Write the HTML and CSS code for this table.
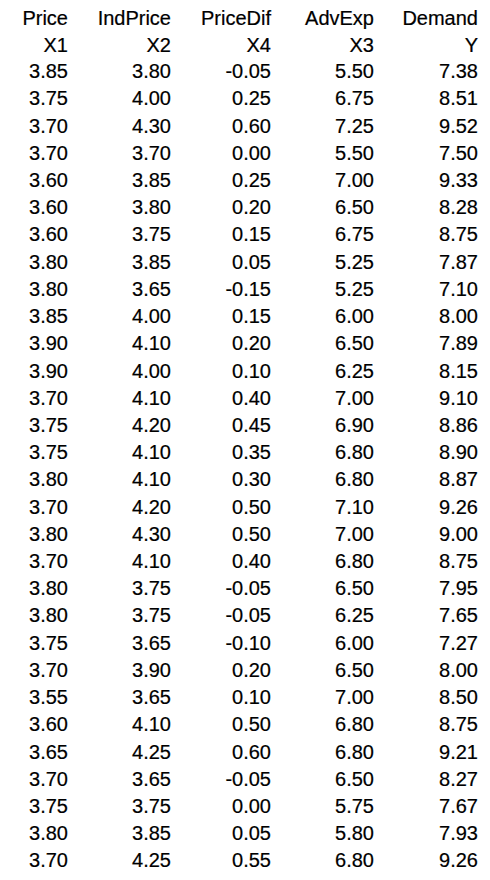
FILE: index.html
```html
<!DOCTYPE html>
<html>
<head>
<meta charset="utf-8">
<link rel="stylesheet" href="styles.css">
</head>
<body>
<div class="sheet">
  <div class="row head1"><span>Price</span><span>IndPrice</span><span>PriceDif</span><span>AdvExp</span><span>Demand</span></div>
  <div class="row head2"><span>X1</span><span>X2</span><span>X4</span><span>X3</span><span>Y</span></div>
  <div class="row"><span>3.85</span><span>3.80</span><span>-0.05</span><span>5.50</span><span>7.38</span></div>
  <div class="row"><span>3.75</span><span>4.00</span><span>0.25</span><span>6.75</span><span>8.51</span></div>
  <div class="row"><span>3.70</span><span>4.30</span><span>0.60</span><span>7.25</span><span>9.52</span></div>
  <div class="row"><span>3.70</span><span>3.70</span><span>0.00</span><span>5.50</span><span>7.50</span></div>
  <div class="row"><span>3.60</span><span>3.85</span><span>0.25</span><span>7.00</span><span>9.33</span></div>
  <div class="row"><span>3.60</span><span>3.80</span><span>0.20</span><span>6.50</span><span>8.28</span></div>
  <div class="row"><span>3.60</span><span>3.75</span><span>0.15</span><span>6.75</span><span>8.75</span></div>
  <div class="row"><span>3.80</span><span>3.85</span><span>0.05</span><span>5.25</span><span>7.87</span></div>
  <div class="row"><span>3.80</span><span>3.65</span><span>-0.15</span><span>5.25</span><span>7.10</span></div>
  <div class="row"><span>3.85</span><span>4.00</span><span>0.15</span><span>6.00</span><span>8.00</span></div>
  <div class="row"><span>3.90</span><span>4.10</span><span>0.20</span><span>6.50</span><span>7.89</span></div>
  <div class="row"><span>3.90</span><span>4.00</span><span>0.10</span><span>6.25</span><span>8.15</span></div>
  <div class="row"><span>3.70</span><span>4.10</span><span>0.40</span><span>7.00</span><span>9.10</span></div>
  <div class="row"><span>3.75</span><span>4.20</span><span>0.45</span><span>6.90</span><span>8.86</span></div>
  <div class="row"><span>3.75</span><span>4.10</span><span>0.35</span><span>6.80</span><span>8.90</span></div>
  <div class="row"><span>3.80</span><span>4.10</span><span>0.30</span><span>6.80</span><span>8.87</span></div>
  <div class="row"><span>3.70</span><span>4.20</span><span>0.50</span><span>7.10</span><span>9.26</span></div>
  <div class="row"><span>3.80</span><span>4.30</span><span>0.50</span><span>7.00</span><span>9.00</span></div>
  <div class="row"><span>3.70</span><span>4.10</span><span>0.40</span><span>6.80</span><span>8.75</span></div>
  <div class="row"><span>3.80</span><span>3.75</span><span>-0.05</span><span>6.50</span><span>7.95</span></div>
  <div class="row"><span>3.80</span><span>3.75</span><span>-0.05</span><span>6.25</span><span>7.65</span></div>
  <div class="row"><span>3.75</span><span>3.65</span><span>-0.10</span><span>6.00</span><span>7.27</span></div>
  <div class="row"><span>3.70</span><span>3.90</span><span>0.20</span><span>6.50</span><span>8.00</span></div>
  <div class="row"><span>3.55</span><span>3.65</span><span>0.10</span><span>7.00</span><span>8.50</span></div>
  <div class="row"><span>3.60</span><span>4.10</span><span>0.50</span><span>6.80</span><span>8.75</span></div>
  <div class="row"><span>3.65</span><span>4.25</span><span>0.60</span><span>6.80</span><span>9.21</span></div>
  <div class="row"><span>3.70</span><span>3.65</span><span>-0.05</span><span>6.50</span><span>8.27</span></div>
  <div class="row"><span>3.75</span><span>3.75</span><span>0.00</span><span>5.75</span><span>7.67</span></div>
  <div class="row"><span>3.80</span><span>3.85</span><span>0.05</span><span>5.80</span><span>7.93</span></div>
  <div class="row"><span>3.70</span><span>4.25</span><span>0.55</span><span>6.80</span><span>9.26</span></div>
</div>
</body>
</html>
```

FILE: styles.css
```css
html, body {
  margin: 0;
  padding: 0;
  background: #ffffff;
}

.sheet {
  padding-top: 6px;
  font-family: "Liberation Sans", Arial, sans-serif;
  font-size: 20px;
  color: #000000;
  width: 478px;
  -webkit-text-stroke: 0.2px #000000;
}

.row {
  display: grid;
  grid-template-columns: 68px 103px 100px 103px 104px;
  height: 27.22px;
  line-height: 27.22px;
  white-space: nowrap;
}

.row span {
  text-align: right;
}

.row.head1 {
  height: 25.6px;
  line-height: 25.6px;
}

.row.head2 {
  height: 26.5px;
  line-height: 26.5px;
}
```
